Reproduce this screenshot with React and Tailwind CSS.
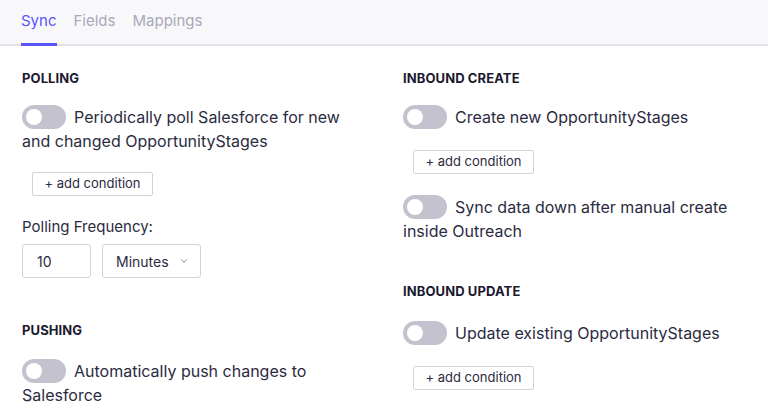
import { ChevronDown } from "lucide-react";

const tabs = ["Sync", "Fields", "Mappings"];

function Toggle() {
  return (
    <span className="relative mr-2 inline-block h-6 w-11 rounded-full bg-[#c3c2ce] align-top">
      <span className="absolute left-[4px] top-[4px] h-4 w-4 rounded-full bg-white" />
    </span>
  );
}

function ToggleRow({ children }) {
  return (
    <p className="text-[16px] leading-6 text-[#2c2b3f]">
      <Toggle />
      {children}
    </p>
  );
}

function AddCondition({ className = "" }) {
  return (
    <button
      className={`ml-[10px] flex h-6 w-[121px] items-center justify-center rounded-[2px] border border-[#d2d2da] bg-white text-[13px] text-[#2c2b3f] ${className}`}
    >
      + add condition
    </button>
  );
}

function Heading({ children, className = "" }) {
  return (
    <h3 className={`text-[13px] font-bold uppercase leading-4 tracking-[0.1px] text-[#1b1a30] ${className}`}>
      {children}
    </h3>
  );
}

export default function App() {
  return (
    <div className="h-[418px] w-[768px] overflow-hidden bg-white font-['Inter','Liberation_Sans',sans-serif]">
      {/* tab bar */}
      <nav className="flex h-[46px] gap-[17px] border-b-2 border-[#e2e2e8] bg-[#f8f8fa] px-[21px]">
        {tabs.map((t, i) => (
          <div
            key={t}
            className={`-mb-[2px] flex items-center border-b-[3px] text-[15px] ${
              i === 0 ? "border-[#5b55f6] text-[#5b55f6]" : "border-transparent text-[#a9a8ba]"
            }`}
          >
            {t}
          </div>
        ))}
      </nav>

      <div className="grid grid-cols-2 gap-x-[38px] px-[22px] pt-[24px]">
        {/* left column */}
        <div className="flex flex-col items-start">
          <Heading className="mb-[19px]">Polling</Heading>
          <ToggleRow>
            Periodically poll Salesforce for new and changed OpportunityStages
          </ToggleRow>
          <AddCondition className="mt-[19px]" />
          <p className="mt-[20px] text-[15px] leading-[22px] text-[#2c2b3f]">Polling Frequency:</p>
          <div className="mt-[6px] flex gap-[11px]">
            <div className="flex h-[34px] w-[69px] items-center rounded-[3px] border border-[#d2d2da] pl-[14px] text-[14px] text-[#2c2b3f]">
              10
            </div>
            <div className="flex h-[34px] w-[99px] items-center rounded-[3px] border border-[#d2d2da] pl-[13px] text-[14px] text-[#2c2b3f]">
              Minutes
              <ChevronDown size={10} strokeWidth={2} className="ml-[10px] text-[#6b6a80]" />
            </div>
          </div>
          <Heading className="mb-[21px] mt-[44px]">Pushing</Heading>
          <ToggleRow>Automatically push changes to Salesforce</ToggleRow>
        </div>

        {/* right column */}
        <div className="flex flex-col items-start">
          <Heading className="mb-[19px]">Inbound Create</Heading>
          <ToggleRow>Create new OpportunityStages</ToggleRow>
          <AddCondition className="mt-[21px]" />
          <div className="mt-[21px]">
            <ToggleRow>Sync data down after manual create inside Outreach</ToggleRow>
          </div>
          <Heading className="mb-[22px] mt-[40px]">Inbound Update</Heading>
          <ToggleRow>Update existing OpportunityStages</ToggleRow>
          <AddCondition className="mt-[21px]" />
        </div>
      </div>
    </div>
  );
}
